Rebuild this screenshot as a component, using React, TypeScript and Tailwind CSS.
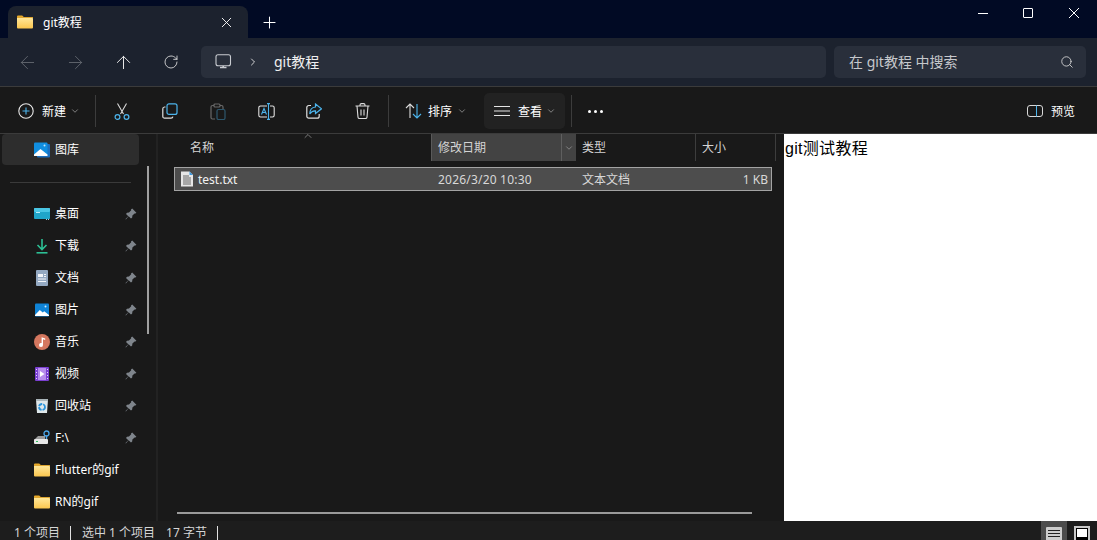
import { ArrowLeft, ArrowRight, ArrowUp, RotateCw, ChevronRight, ChevronDown, ChevronUp, Search, X, Plus } from "lucide-react";
import type { ReactNode } from "react";

const blue = "#4cb4ec";

function Folder({ size = 16 }: { size?: number }) {
    return (
        <svg width={size} height={size} viewBox="0 0 16 16">
            <defs>
                <linearGradient id="folderBody" x1="0" y1="0" x2="0" y2="1">
                    <stop offset="0" stopColor="#ffe79a" />
                    <stop offset="1" stopColor="#fbc64e" />
                </linearGradient>
            </defs>
            <path d="M0 2.5A1 1 0 0 1 1 1.5h4.2l1.6 1.6H0z" fill="#e8a928" />
            <path d="M0 3.8h15a1 1 0 0 1 1 1v8.7a1 1 0 0 1-1 1H1a1 1 0 0 1-1-1z" fill="url(#folderBody)" />
            <path d="M0 3.1h16v.9H0z" fill="#eeaf30" />
        </svg>
    );
}

function Pictures() {
    return (
        <svg width="16" height="16" viewBox="0 0 16 16">
            <rect x="1" y="1.5" width="14" height="13" rx="1" fill="#0f83d6" />
            <path d="M1 13l4.8-5 3 2.6 1.4-1.3 4.8 3.7v1H1z" fill="#fff" />
            <circle cx="11.5" cy="4.5" r="1" fill="#cfe9fb" />
        </svg>
    );
}

const sidebarIcons: Record<string, ReactNode> = {
    gallery: (
        <svg width="16" height="16" viewBox="0 0 16 16">
            <rect x="3" y="2" width="13" height="13.5" rx="1" fill="#1b6fc0" />
            <rect x="0" y="0.5" width="13.5" height="13.5" rx="1" fill="#118ee0" />
            <path d="M0 12.5l6.5-5.5 7 5.5V14H0z" fill="#fff" />
            <circle cx="10.5" cy="3.5" r="1" fill="#bfe4fb" />
        </svg>
    ),
    desktop: (
        <svg width="16" height="16" viewBox="0 0 16 16">
            <rect x="0" y="2" width="16" height="11" rx="1" fill="#20a5c9" />
            <rect x="0" y="2" width="16" height="4" rx="1" fill="#4ac6e4" />
            <rect x="2" y="6" width="4" height="1" fill="#bdeef8" />
            <rect x="12" y="13" width="1" height="1" fill="#a8d4e0" />
            <rect x="14" y="13" width="1" height="1" fill="#a8d4e0" />
        </svg>
    ),
    download: (
        <svg width="16" height="16" viewBox="0 0 16 16" fill="none" stroke="#2cbf94" strokeWidth="1.6">
            <path d="M8 1v10M3.5 7L8 11.5 12.5 7" />
            <path d="M2.5 14.8h11" />
        </svg>
    ),
    docs: (
        <svg width="16" height="16" viewBox="0 0 16 16">
            <rect x="2" y="0" width="12" height="16" rx="1" fill="#94a9c2" />
            <path d="M4 4h5v3H4z M10 4h2v1h-2z M10 6h2v1h-2z M4 8.5h8v1H4z M4 11h8v1H4z" fill="#f2f5f9" />
        </svg>
    ),
    pictures: <Pictures />,
    music: (
        <svg width="16" height="16" viewBox="0 0 16 16">
            <circle cx="8" cy="8" r="8" fill="#d4775f" />
            <path d="M7.6 3.2l3.6 1.2v1.6L9 5.3v5.6a2 2 0 1 1-1.4-1.8z" fill="#fff" />
        </svg>
    ),
    video: (
        <svg width="16" height="16" viewBox="0 0 16 16">
            <rect x="1" y="1" width="14" height="14" rx="1" fill="#7a3fd1" />
            <rect x="4" y="2" width="8" height="12" fill="#b78ced" />
            <path d="M6 5l4.5 3L6 11z" fill="#fff" />
            <path d="M2 3h1v1H2zM2 6h1v1H2zM2 9h1v1H2zM2 12h1v1H2zM13 3h1v1h-1zM13 6h1v1h-1zM13 9h1v1h-1zM13 12h1v1h-1z" fill="#e5d8f8" />
        </svg>
    ),
    recycle: (
        <svg width="16" height="16" viewBox="0 0 16 16">
            <path d="M2 1.5h12L13 15H3z" fill="#dfe7ea" />
            <path d="M2 1h12v2H2z" fill="#aab5ba" />
            <circle cx="8" cy="9" r="3" fill="none" stroke="#2b93da" strokeWidth="1.8" strokeDasharray="4 1" />
        </svg>
    ),
    drive: (
        <svg width="16" height="16" viewBox="0 0 16 16">
            <path d="M1 9l3-3h7v3z" fill="#9a9a9a" />
            <rect x="0" y="9" width="14" height="5" rx="1" fill="#e8e8e8" />
            <rect x="2" y="11" width="2" height="1" fill="#2fbf5c" />
            <circle cx="12.5" cy="3.5" r="2.5" fill="none" stroke="#4aa5e8" strokeWidth="1.3" />
            <path d="M12.5 5.5V9" stroke="#4aa5e8" strokeWidth="1.4" />
        </svg>
    ),
    folder: <Folder />,
};

const sidebarItems = [
    { label: "桌面", icon: "desktop", pin: true },
    { label: "下载", icon: "download", pin: true },
    { label: "文档", icon: "docs", pin: true },
    { label: "图片", icon: "pictures", pin: true },
    { label: "音乐", icon: "music", pin: true },
    { label: "视频", icon: "video", pin: true },
    { label: "回收站", icon: "recycle", pin: true },
    { label: "F:\\", icon: "drive", pin: true },
    { label: "Flutter的gif", icon: "folder", pin: false },
    { label: "RN的gif", icon: "folder", pin: false },
];

function Pin() {
    return (
        <svg width="12" height="12" viewBox="0 0 12 12" fill="#7f858c">
            <path d="M7.2 0.6l4.2 4.2-1 .8-.8-.2-2.2 2.2-.2 2-1.2 1-2.4-2.4L.9 11.5l-.4-.4 2.8-2.9L1 5.9l1-1.2 2-.2 2.2-2.2-.2-.8z" />
        </svg>
    );
}

function ToolIcon({ children, dim }: { children: ReactNode; dim?: boolean }) {
    return <div className={`flex h-10 w-12 items-center justify-center ${dim ? "opacity-40" : ""}`}>{children}</div>;
}

function NavIcon({ children }: { children: ReactNode }) {
    return <div className="flex w-12 items-center justify-center">{children}</div>;
}

function Divider() {
    return <div className="h-[32px] w-px bg-[#3c3c3c]" />;
}

export default function App() {
    return (
        <div className="relative flex h-[540px] w-[1097px] flex-col overflow-hidden bg-[#191919] text-[12px] text-white [font-family:'Noto_Sans','Noto_Sans_CJK_SC',sans-serif]">
            {/* 标题栏 */}
            <div className="flex h-[38px] shrink-0 items-end bg-[#010a24] pl-2">
                <div className="flex h-[32px] w-[240px] items-center rounded-t-lg bg-[#1c222e] pl-[9px] pr-[13px]">
                    <Folder />
                    <span className="ml-[10px] flex-1 pt-[2px] text-[12px] leading-none">git教程</span>
                    <X size={17} strokeWidth={1.3} />
                </div>
                <div className="mb-[6px] ml-[12px]">
                    <Plus size={19} strokeWidth={1.3} />
                </div>
                <div className="mb-[20px] ml-auto mr-[18px] flex items-center">
                    <svg width="10" height="10" viewBox="0 0 10 10" stroke="#ffffff" strokeWidth="1">
                        <path d="M0 5.5h10" />
                    </svg>
                    <div className="ml-[35px] h-[10px] w-[10px] rounded-[1px] border border-white" />
                    <svg width="10" height="10" viewBox="0 0 10 10" stroke="#ffffff" strokeWidth="1" className="ml-[36px]">
                        <path d="M0 0l10 10M10 0L0 10" />
                    </svg>
                </div>
            </div>

            {/* 地址栏 */}
            <div className="flex h-[48px] shrink-0 items-center bg-[#1c222e] pl-[3px] pr-[11px]">
                <NavIcon>
                    <ArrowLeft size={21} strokeWidth={1} className="text-[#666a72]" />
                </NavIcon>
                <NavIcon>
                    <ArrowRight size={21} strokeWidth={1} className="text-[#666a72]" />
                </NavIcon>
                <NavIcon>
                    <ArrowUp size={21} strokeWidth={1.1} className="text-[#eeeeee]" />
                </NavIcon>
                <NavIcon>
                    <RotateCw size={16} strokeWidth={1.3} className="text-[#dddddd]" />
                </NavIcon>
                <div className="ml-[6px] flex h-[32px] w-[625px] items-center rounded-[5px] bg-[#292f3b] pl-[14px]">
                    <svg width="17" height="16" viewBox="0 0 17 16" fill="none" stroke="#c9ccd1" strokeWidth="1.1">
                        <rect x="1" y="0.8" width="14.5" height="11" rx="2" />
                        <path d="M5 13.5h6.5M8.2 12v1.5" strokeWidth="1.6" />
                    </svg>
                    <ChevronRight size={12} strokeWidth={1.8} className="ml-[15px] text-[#e4e4e4]" />
                    <span className="mb-[2px] ml-[15px] text-[14px] text-[#f0f0f0]">git教程</span>
                </div>
                <div className="ml-[8px] flex h-[32px] flex-1 items-center justify-between rounded-[5px] bg-[#292f3b] pl-[15px] pr-[12px]">
                    <span className="mb-[2px] text-[14px] text-[#c6c8cc]">在 git教程 中搜索</span>
                    <Search size={14} strokeWidth={1.5} className="text-[#d5d5d5]" />
                </div>
            </div>

            {/* 工具栏 */}
            <div className="flex h-[48px] shrink-0 items-center border-y border-[#3b3b3b] bg-[#191919] pl-[18px] pr-[22px] pt-[2px]">
                <svg width="16" height="16" viewBox="0 0 16 16" fill="none" stroke="#e8e8e8" strokeWidth="1.1">
                    <circle cx="8" cy="8" r="7.2" />
                    <path d="M8 4.5v7M4.5 8h7" stroke={blue} />
                </svg>
                <span className="ml-[8px] pt-[1px]">新建</span>
                <ChevronDown size={10} strokeWidth={1.5} className="ml-[4px] text-[#bbbbbb]" />
                <div className="ml-[15px] mr-[2px]">
                    <Divider />
                </div>
                <ToolIcon>
                    <svg width="16" height="17" viewBox="0 0 16 17" fill="none" stroke="#d8d8d8" strokeWidth="1.1">
                        <path d="M3.5 0.5l6 10.5M12.5 0.5l-6 10.5" />
                        <circle cx="3.5" cy="14" r="2.4" stroke={blue} strokeWidth="1.2" />
                        <circle cx="12.5" cy="14" r="2.4" stroke={blue} strokeWidth="1.2" />
                    </svg>
                </ToolIcon>
                <ToolIcon>
                    <svg width="16" height="16" viewBox="0 0 16 16" fill="none" strokeWidth="1.2">
                        <path d="M3.5 4H2.5A1.8 1.8 0 0 0 .8 5.8v7.6a1.8 1.8 0 0 0 1.8 1.8H9a2 2 0 0 0 1.9-1.6" stroke="#e0e0e0" />
                        <rect x="5" y="0.8" width="10" height="10.6" rx="2" stroke={blue} />
                    </svg>
                </ToolIcon>
                <ToolIcon dim>
                    <svg width="16" height="17" viewBox="0 0 16 17" fill="none" strokeWidth="1.2">
                        <path d="M4 2.5H2.5a1.5 1.5 0 0 0-1.5 1.5v10.5A1.5 1.5 0 0 0 2.5 16h2.5M10 2.5h1.5A1.5 1.5 0 0 1 13 4v2" stroke="#e0e0e0" />
                        <rect x="4" y="1" width="6" height="3" rx="1" stroke="#e0e0e0" />
                        <rect x="7" y="6.5" width="8" height="10" rx="1.5" stroke={blue} />
                    </svg>
                </ToolIcon>
                <ToolIcon>
                    <svg width="17" height="17" viewBox="0 0 17 17" fill="none" strokeWidth="1.1">
                        <path d="M9 3H2.5A1.7 1.7 0 0 0 .8 4.7v7.6A1.7 1.7 0 0 0 2.5 14H9M12 3h2.5a1.7 1.7 0 0 1 1.7 1.7v7.6a1.7 1.7 0 0 1-1.7 1.7H12" stroke="#e0e0e0" />
                        <path d="M10.5 1v15M9 .6h3M9 16.4h3M3.5 11.5L6 5.5l2.5 6M4.5 9.5h3" stroke={blue} />
                    </svg>
                </ToolIcon>
                <ToolIcon>
                    <svg width="16" height="16" viewBox="0 0 16 16" fill="none" strokeWidth="1.2">
                        <path d="M5 2.5H2.8A2 2 0 0 0 .8 4.5v8.7a2 2 0 0 0 2 2h8.4a2 2 0 0 0 2-2V11" stroke="#e0e0e0" />
                        <path d="M9.5 1l6 4.8-6 4.7V7.8C7 7.6 5 8.8 3.8 11c0-4.5 2.3-6.7 5.7-7z" stroke={blue} />
                    </svg>
                </ToolIcon>
                <ToolIcon>
                    <svg width="15" height="16" viewBox="0 0 15 16" fill="none" stroke="#dcdcdc" strokeWidth="1.1">
                        <path d="M.5 3h14M2 3l1 11.2A1.5 1.5 0 0 0 4.5 15.5h6a1.5 1.5 0 0 0 1.5-1.3L13 3" />
                        <path d="M5 3V2a1.4 1.4 0 0 1 1.4-1.4h2.2A1.4 1.4 0 0 1 10 2v1M6 6.5v6M9 6.5v6" />
                    </svg>
                </ToolIcon>
                <div className="ml-[2px]">
                    <Divider />
                </div>
                <svg width="17" height="16" viewBox="0 0 17 16" fill="none" strokeWidth="1.1" className="ml-[16px]">
                    <path d="M5 15V1M1 5l4-4 4 4" stroke="#dcdcdc" />
                    <path d="M12 1v14M8 11l4 4 4-4" stroke={blue} />
                </svg>
                <span className="ml-[6px] pt-[1px]">排序</span>
                <ChevronDown size={10} strokeWidth={1.5} className="ml-[5px] text-[#bbbbbb]" />
                <div className="ml-[17px] flex h-[36px] w-[81px] items-center rounded-[5px] bg-[#222222] pl-[10px]">
                    <svg width="16" height="12" viewBox="0 0 16 12" fill="none" stroke="#e4e4e4" strokeWidth="1">
                        <path d="M0 1.5h16M0 6h16M0 10.5h16" />
                    </svg>
                    <span className="ml-[8px] pt-[1px]">查看</span>
                    <ChevronDown size={10} strokeWidth={1.5} className="ml-[4px] text-[#bbbbbb]" />
                </div>
                <div className="ml-[6px]">
                    <Divider />
                </div>
                <div className="ml-[16px] flex gap-[3px]">
                    <div className="h-[3px] w-[3px] rounded-full bg-white" />
                    <div className="h-[3px] w-[3px] rounded-full bg-white" />
                    <div className="h-[3px] w-[3px] rounded-full bg-white" />
                </div>
                <div className="ml-auto flex items-center">
                    <svg width="16" height="12" viewBox="0 0 16 12" fill="none" strokeWidth="1">
                        <rect x="0.5" y="0.5" width="15" height="11" rx="2.5" stroke="#d8d8d8" />
                        <path d="M9.5 0.5v11" stroke={blue} />
                    </svg>
                    <span className="ml-[8px] pt-[1px]">预览</span>
                </div>
            </div>

            {/* 主体 */}
            <div className="flex min-h-0 flex-1">
                <aside className="relative w-[158px] shrink-0 border-r-2 border-[#222222] pl-[2px]">
                    <div className="flex h-[31px] w-[137px] items-center rounded-[4px] bg-[#2d2d2d] pl-[32px]">
                        <span className="flex w-[21px]">{sidebarIcons.gallery}</span>
                        <span>图库</span>
                    </div>
                    <div className="ml-[8px] mt-[17px] h-px w-[121px] bg-[#3a3a3a]" />
                    <div className="mt-[15px]">
                        {sidebarItems.map((item) => (
                            <div key={item.label} className="flex h-[32px] w-[135px] items-center pl-[32px]">
                                <span className="flex w-[21px]">{sidebarIcons[item.icon]}</span>
                                <span>{item.label}</span>
                                {item.pin && (
                                    <span className="ml-auto">
                                        <Pin />
                                    </span>
                                )}
                            </div>
                        ))}
                    </div>
                    <div className="absolute left-[147px] top-[32px] h-[168px] w-[2px] bg-[#a0a0a0]" />
                </aside>

                <main className="relative min-w-0 flex-1 bg-[#191919] pl-[2px]">
                    <div className="flex h-[27px] text-[#d4d4d4]">
                        <div className="relative flex w-[271px] items-center pl-[30px]">
                            名称
                            <ChevronUp size={12} strokeWidth={1.2} className="absolute left-[142px] top-[-4px] text-[#bbbbbb]" />
                        </div>
                        <div className="flex w-[145px] items-stretch bg-[#434343]">
                            <div className="flex flex-1 items-center border-l border-[#5a5a5a] pl-[6px]">修改日期</div>
                            <div className="flex w-[15px] items-center justify-center border-l border-[#5f5f5f]">
                                <ChevronDown size={10} strokeWidth={1.3} className="text-[#bbbbbb]" />
                            </div>
                        </div>
                        <div className="flex w-[119px] items-center pl-[6px]">类型</div>
                        <div className="flex w-[81px] items-center border-x border-[#3d3d3d] pl-[6px]">大小</div>
                    </div>
                    <div className="ml-[14px] mt-[6px] flex h-[24px] w-[598px] items-center border border-[#a3a3a3] bg-[#4d4d4d] pt-[1px]">
                        <svg width="16" height="16" viewBox="0 0 16 16" className="ml-[4px] -translate-y-[1px]">
                            <path d="M2 0.5h8.5L14 4v11.5H2z" fill="#e6e6e6" />
                            <path d="M10.5 0.5L14 4h-3.5z" fill="#3c9ae0" />
                            <path d="M4 5h6M4 7h8M4 9h8M4 11h8M4 13h8" stroke="#666666" strokeWidth="1" />
                        </svg>
                        <span className="ml-[3px] w-[240px] text-[#f2f2f2]">test.txt</span>
                        <span className="w-[144px] tracking-[0.2px] text-[#d8d8d8]">2026/3/20 10:30</span>
                        <span className="w-[119px] text-[#d8d8d8]">文本文档</span>
                        <span className="ml-[4px] w-[63px] text-right text-[#d8d8d8]">1 KB</span>
                    </div>
                    <div className="absolute bottom-[7px] left-[19px] h-[2px] w-[575px] bg-[#9a9a9a]" />
                </main>

                <section className="w-[321px] shrink-0 pl-[8px]">
                    <div className="h-full w-full bg-white pl-px text-[16px] leading-[29px] tracking-[0.3px] text-black [font-family:'Liberation_Sans','Noto_Sans_CJK_SC',sans-serif]">
                        git测试教程
                    </div>
                </section>
            </div>

            {/* 状态栏 */}
            <div className="flex h-[19px] shrink-0 items-start bg-[#1d1d1d] pl-[14px] text-[#d6d6d6]">
                <span className="mt-[4px] leading-4">1 个项目</span>
                <div className="ml-[10px] mt-[5px] h-[14px] w-px bg-[#e0e0e0]" />
                <span className="ml-[11px] mt-[4px] leading-4">选中 1 个项目</span>
                <span className="ml-[11px] mt-[4px] leading-4">17 字节</span>
                <div className="ml-[10px] mt-[5px] h-[14px] w-px bg-[#e0e0e0]" />
                <div className="ml-auto flex h-full items-start">
                    <div className="flex h-[19px] w-[26px] justify-center bg-[#4c4c4c] pt-[6px]">
                        <div className="flex h-[13px] w-[16px] flex-col gap-[2px] rounded-t-[1px] bg-[#cdcdcd] px-[2px] pt-[3px]">
                            <div className="h-px bg-[#222222]" />
                            <div className="h-px bg-[#222222]" />
                            <div className="h-px bg-[#222222]" />
                        </div>
                    </div>
                    <div className="flex h-[19px] w-[30px] justify-center pt-[5px]">
                        <div className="h-[14px] w-[16px] bg-[#c8c8c8] p-[2px]">
                            <div className="h-[12px] bg-black p-px">
                                <div className="h-[8px] bg-white" />
                            </div>
                        </div>
                    </div>
                </div>
            </div>
        </div>
    );
}
